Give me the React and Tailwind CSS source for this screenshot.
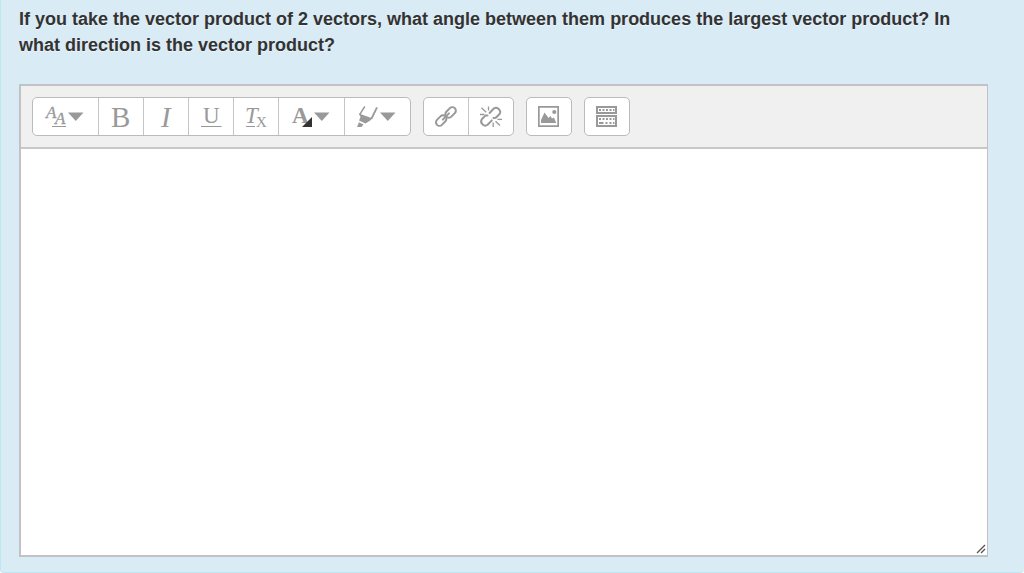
import React from "react";

const serif = "font-['Liberation_Serif',serif]";

function Icon({ width = 44, children }) {
  return (
    <svg
      aria-hidden="true"
      width={width}
      height="37"
      viewBox={`0 0 ${width} 37`}
      fill="#999999"
      className={`block ${serif}`}
    >
      {children}
    </svg>
  );
}

function Caret() {
  return <path d="M35 14.5H50.5L42.8 23Z" />;
}

function Group({ label, children }) {
  return (
    <div
      role="group"
      aria-label={label}
      className="flex divide-x divide-[#c5c5c5] overflow-hidden rounded-[5px] border border-[#bbbbbb] bg-white"
    >
      {children}
    </div>
  );
}

function Tool({ label, children }) {
  return (
    <button type="button" aria-label={label} title={label} className="box-content block cursor-pointer hover:bg-gray-50">
      {children}
    </button>
  );
}

const chainLink = (
  <g fill="none" stroke="#999999" strokeWidth="2" strokeLinecap="round">
    <rect x="20.6" y="10.9" width="12" height="7" rx="3.5" transform="rotate(-45 26.6 14.4)" />
    <rect x="11.2" y="19.1" width="12" height="7" rx="3.5" transform="rotate(-45 17.2 22.6)" />
    <path d="M18.8 21.6L25 15.4" />
  </g>
);

const brokenLink = (
  <g fill="none" stroke="#999999" strokeWidth="2" strokeLinecap="round">
    <path d="M20.6 15L24.8 10.6Q27 8.8 29.4 10.8Q32.4 13.6 30.6 16L26.8 19.8L24.5 20" />
    <path d="M22.8 22.4L18.6 26.8Q16.2 28.6 13.6 26.4Q11 23.8 12.8 21.2L16.6 17.4L18.5 17.4" />
    <path
      strokeWidth="1.3"
      strokeLinecap="butt"
      d="M19.5 8.5V12.5M12.5 9.8L17.2 14.2M11 16.5H15.5M28.5 21.3H33M26.5 23.2L31 27.4M24.2 24.5V29"
    />
  </g>
);

export default function App() {
  return (
    <main className="rounded-b border-b border-l border-[#bce8f1] bg-[#d9ebf5] pr-9 pb-[15px] pl-[18px] font-['Liberation_Sans',Arial,sans-serif] text-[#333333]">
      <label
        htmlFor="answer"
        className="block pt-1.5 pb-[26px] text-lg leading-[26px] font-bold [text-shadow:0_1px_0_rgba(255,255,255,0.5)]"
      >
        If you take the vector product of 2 vectors, what angle between them produces the largest vector product? In
        what direction is the vector product?
      </label>

      <div className="border-y-2 border-r border-l-2 border-[#c0c2c4]">
        <div
          role="toolbar"
          aria-label="Text formatting"
          className="flex flex-wrap gap-3 border-b-2 border-[#c8c8c8] bg-[#f0f0f0] p-[11px]"
        >
          <Group label="Text style">
            <Tool label="Paragraph styles">
              <Icon width={65}>
                <text x="13" y="20" fontSize="17" fontStyle="italic" stroke="#999999" strokeWidth="0.3">
                  A<tspan x="22" y="26">A</tspan>
                </text>
                <path d="M19 28H33V29H19Z" />
                <Caret />
              </Icon>
            </Tool>
            <Tool label="Bold">
              <Icon>
                <text x="12" y="29" fontSize="29">B</text>
              </Icon>
            </Tool>
            <Tool label="Italic">
              <Icon>
                <text x="17" y="29" fontSize="29" fontStyle="italic">I</text>
              </Icon>
            </Tool>
            <Tool label="Underline">
              <Icon>
                <text x="14" y="25" fontSize="23">U</text>
                <path d="M12 28H32.5V29H12Z" />
              </Icon>
            </Tool>
            <Tool label="Clear formatting">
              <Icon>
                <text x="11" y="25" fontSize="23" fontStyle="italic">T</text>
                <text x="22" y="29" fontSize="15">X</text>
                <path d="M12 28H21V29H12Z" />
              </Icon>
            </Tool>
            <Tool label="Font colour">
              <Icon width={65}>
                <text x="13" y="25" fontSize="23" fontWeight="bold">A</text>
                <path d="M23 29H33V19Z" fill="#333333" />
                <Caret />
              </Icon>
            </Tool>
            <Tool label="Background colour">
              <Icon width={65}>
                <path d="M13.8 15.5L26.5 20L26 22L20.5 25.5L14 22.4L15.5 19Z" />
                <path d="M14 24.3L18.5 26.4L16.5 29H12Z" />
                <path fill="none" stroke="#999999" strokeWidth="1.4" d="M19.8 8.5L14.5 16.8" />
                <path fill="none" stroke="#999999" strokeWidth="1.8" d="M32 9.3L26.3 21" />
                <Caret />
              </Icon>
            </Tool>
          </Group>

          <Group label="Links">
            <Tool label="Link">
              <Icon>{chainLink}</Icon>
            </Tool>
            <Tool label="Unlink">
              <Icon>{brokenLink}</Icon>
            </Tool>
          </Group>

          <Group label="Media">
            <Tool label="Image">
              <Icon>
                <path fillRule="evenodd" d="M11 8H32V29H11ZM12.7 9.7V27.3H30.3V9.7Z" />
                <path d="M14 25V22L17.5 14.5L21.5 20L23.5 18L25 20.5L27 19.5L29.2 25Z" />
                <circle cx="27.3" cy="14" r="2.1" />
              </Icon>
            </Tool>
          </Group>

          <Group label="Special characters">
            <Tool label="Keyboard">
              <Icon>
                <path d="M11 8H32V16H11ZM11 17H32V29H11Z" />
                <path fill="#ffffff" d="M13 10H30V14H13ZM13 19H30V27H13Z" />
                <path
                  stroke="#999999"
                  strokeWidth="2"
                  d="M14 12H16M17.5 12H19.5M21 12H23M24.5 12H26.5M28 12H29.5M14 21H16M17.5 21H19.5M21 21H23M24.5 21H26.5M28 21H29.5M14 25H18.5M20.5 25H22.5M24.5 25H26.5M28 25H29.5"
                />
              </Icon>
            </Tool>
          </Group>
        </div>
        <div className="relative">
          <textarea
            id="answer"
            rows="14"
            className="block w-full resize-y bg-white px-2 text-base leading-[29px] outline-none [&::-webkit-resizer]:bg-transparent"
          />
          <svg
            aria-hidden="true"
            width="11"
            height="11"
            viewBox="0 0 11 11"
            className="pointer-events-none absolute right-0 bottom-0"
            fill="none"
            stroke="#555555"
            strokeWidth="1.3"
          >
            <path d="M1 9L9 1M5 9L9 5" />
          </svg>
        </div>
      </div>
    </main>
  );
}
